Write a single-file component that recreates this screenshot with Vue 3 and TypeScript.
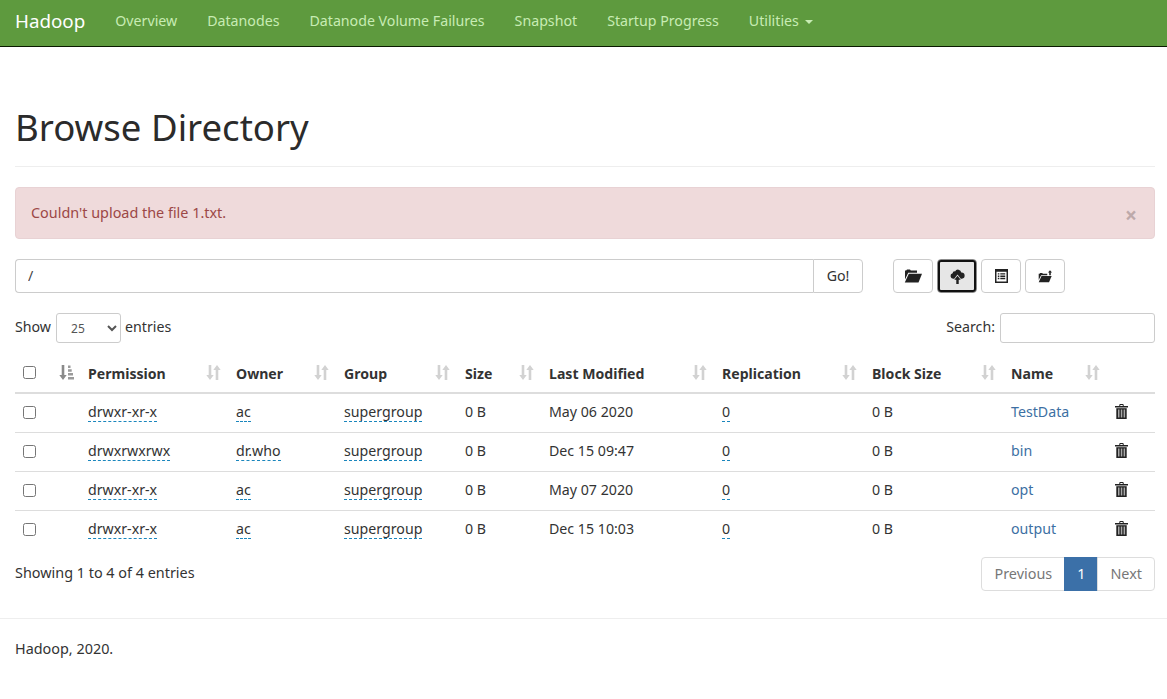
<script setup lang="ts">
interface Row {
  perm: string
  owner: string
  modified: string
  name: string
}

const navItems: string[] = ['Overview', 'Datanodes', 'Datanode Volume Failures', 'Snapshot', 'Startup Progress']
const headers: string[] = ['Permission', 'Owner', 'Group', 'Size', 'Last Modified', 'Replication', 'Block Size', 'Name']
const rows: Row[] = [
  { perm: 'drwxr-xr-x', owner: 'ac', modified: 'May 06 2020', name: 'TestData' },
  { perm: 'drwxrwxrwx', owner: 'dr.who', modified: 'Dec 15 09:47', name: 'bin' },
  { perm: 'drwxr-xr-x', owner: 'ac', modified: 'May 07 2020', name: 'opt' },
  { perm: 'drwxr-xr-x', owner: 'ac', modified: 'Dec 15 10:03', name: 'output' },
]
</script>

<template>
  <div class="page">
    <nav class="navbar">
      <a class="brand">Hadoop</a>
      <a v-for="item in navItems" :key="item" class="nav-link">{{ item }}</a>
      <a class="nav-link">Utilities <span class="caret"></span></a>
    </nav>

    <main class="container">
      <h1 class="page-title">Browse Directory</h1>

      <div class="alert">
        <span>Couldn't upload the file 1.txt.</span>
        <span class="close">×</span>
      </div>

      <div class="toolbar">
        <div class="path-group">
          <input class="path-input" value="/" />
          <button class="go">Go!</button>
        </div>
        <div class="tools">
          <button class="tool">
            <svg viewBox="0 0 18 14" width="18" height="14"><path d="M1 1.500h1.200L3 .5h3l.8 1H13v2.300H4.200L1 10.500z" fill="#222"/><path d="M4.800 4.800H18L14.500 13.500H.8z" fill="#222"/></svg>
          </button>
          <button class="tool active">
            <svg viewBox="0 0 16 17" width="15" height="16"><path d="M3.400 11.400A3 3 0 0 1 2.800 5.500a2.200 2.200 0 0 1 2.600-1.900A3.500 3.500 0 0 1 12 4.800a3.300 3.300 0 0 1 .6 6.600H11.500L8 6.800l-3.500 4.600z" fill="#222"/><path d="M8 8.300l3.400 4.200H9.300V17H6.700v-4.500H4.600z" fill="#222"/></svg>
          </button>
          <button class="tool">
            <svg viewBox="0 0 14 15" width="13" height="14"><path d="M.8.800h12.400v13.400H.8z" fill="none" stroke="#222" stroke-width="1.600"/><path d="M1 1h12v2H1zM3 4.500h1.700V6H3zM5.700 4.500H11V6H5.700zM3 7h1.700v1.500H3zM5.700 7H11v1.500H5.700zM3 9.500h1.700V11H3zM5.700 9.500H11V11H5.700z" fill="#222"/></svg>
          </button>
          <button class="tool">
            <svg viewBox="0 0 17 14" width="15" height="13"><path d="M.8 4h1l.7-.9h2.300l.7.900H10.500v1.500H3.500L.8 11z" fill="#222"/><path d="M4 6.300H15.500L12.500 13.500H.8z" fill="#222"/><path d="M13.600 0l2.300 2.600h-1.400V5.500h-1.800V2.600h-1.400z" fill="#222"/></svg>
          </button>
        </div>
      </div>

      <div class="table-controls">
        <label class="length">
          Show
          <select class="length-select"><option>25</option></select>
          entries
        </label>
        <label class="search">
          Search:
          <input class="search-input" />
        </label>
      </div>

      <table class="files">
        <colgroup>
          <col class="c-check" />
          <col class="c-sort" />
          <col class="c-perm" />
          <col class="c-owner" />
          <col class="c-group" />
          <col class="c-size" />
          <col class="c-mod" />
          <col class="c-rep" />
          <col class="c-block" />
          <col class="c-name" />
          <col />
        </colgroup>
        <thead>
          <tr>
            <th class="check-head"><input type="checkbox" class="check" /></th>
            <th class="sort-only">
              <svg class="sort-icon" viewBox="0 0 15 15" width="15" height="15"><path d="M2.700 0h2.600v10h2.400L4 15 .3 10h2.400z" fill="#8a8a8a"/><path d="M9 .5h2.500v2.400H9zM9 4.300h3.700v2.400H9zM9 8.100h5v2.400H9zM9 11.900h6v2.600H9z" fill="#9a9a9a"/></svg>
            </th>
            <th v-for="h in headers" :key="h" class="sortable">
              {{ h }}
              <svg class="sort-icon" viewBox="0 0 15 15" width="15" height="15"><path d="M2.700 0h2.600v10h2.400L4 15 .3 10h2.400z" fill="#d2d2d2"/><path d="M9.700 15h2.600V5h2.400L11 0 7.300 5h2.400z" fill="#d2d2d2"/></svg>
            </th>
            <th></th>
          </tr>
        </thead>
        <tbody>
          <tr v-for="r in rows" :key="r.name">
            <td class="check-cell"><input type="checkbox" class="check" /></td>
            <td></td>
            <td><span class="editable">{{ r.perm }}</span></td>
            <td><span class="editable">{{ r.owner }}</span></td>
            <td><span class="editable">supergroup</span></td>
            <td>0 B</td>
            <td>{{ r.modified }}</td>
            <td><span class="editable">0</span></td>
            <td>0 B</td>
            <td><a class="link">{{ r.name }}</a></td>
            <td>
              <svg class="trash" viewBox="0 0 13 15" width="13" height="15"><path d="M4.300 2V.9C4.300.4 4.700 0 5.200 0h2.600c.5 0 .9.400.9.900V2H13v1.500H0V2zM5.300 2h2.400V1H5.300z" fill="#222" fill-rule="evenodd"/><path d="M1.300 4.200h10.400V15H1.300z" fill="#222"/><path d="M3 5.500h1.500V13.500H3zM5.800 5.500h1.500V13.500H5.800zM8.600 5.500h1.500V13.500H8.600z" fill="#a8a8a8"/></svg>
            </td>
          </tr>
        </tbody>
      </table>

      <div class="table-footer">
        <div class="info">Showing 1 to 4 of 4 entries</div>
        <div class="pager">
          <a class="page-btn first">Previous</a>
          <a class="page-btn current">1</a>
          <a class="page-btn last">Next</a>
        </div>
      </div>
    </main>

    <footer class="footer">
      <p>Hadoop, 2020.</p>
    </footer>
  </div>
</template>

<style>
html, body {
  margin: 0;
  background: #fff;
}
</style>

<style scoped>
.page {
  font-family: "Noto Sans", "Open Sans", sans-serif;
  font-size: 14.2px;
  line-height: 20px;
  color: #333;
  width: 1167px;
  height: 699px;
  overflow: hidden;
}
.navbar {
  box-sizing: border-box;
  display: flex;
  align-items: center;
  height: 47px;
  background: #5e9a3e;
  border-bottom: 1px solid #0a1a00;
  padding: 0 0 5px 15px;
}
.brand {
  font-size: 18.8px;
  color: #fff;
  margin-right: 30px;
}
.nav-link {
  color: #c8ecb4;
  margin-right: 30px;
}
.caret {
  display: inline-block;
  width: 0;
  height: 0;
  margin-left: 2px;
  vertical-align: middle;
  border-top: 4px solid #c8ecb4;
  border-left: 4px solid transparent;
  border-right: 4px solid transparent;
}
.container {
  padding: 0 12px 0 15px;
}
.page-title {
  margin: 0;
  padding: 55px 0 13px;
  height: 51px;
  font-size: 36.6px;
  line-height: 51px;
  font-weight: 400;
  color: #2b2b2b;
  border-bottom: 1px solid #eee;
}
.alert {
  margin-top: 20px;
  height: 50px;
  display: flex;
  align-items: center;
  justify-content: space-between;
  padding: 0 15px;
  background: #efdadb;
  border: 1px solid #e8d2d4;
  border-radius: 4px;
  color: #9c4746;
  font-size: 14.4px;
}
.close {
  font-size: 21px;
  font-weight: 700;
  color: #bda9aa;
  padding-right: 2px;
  padding-top: 3px;
}
.toolbar {
  display: flex;
  margin-top: 20px;
}
.path-group {
  display: flex;
  width: 848px;
  height: 34px;
}
.path-input {
  flex: 1;
  min-width: 0;
  box-sizing: border-box;
  border: 1px solid #ccc;
  border-right: 0;
  border-radius: 4px 0 0 4px;
  padding: 0 0 0 12px;
  font: inherit;
  color: #444;
  outline: none;
}
.go {
  width: 50px;
  border: 1px solid #ccc;
  border-radius: 0 4px 4px 0;
  background: #fff;
  font: inherit;
  color: #333;
  padding: 0;
}
.tools {
  display: flex;
  gap: 4px;
  margin-left: 30px;
}
.tool {
  box-sizing: border-box;
  width: 40px;
  height: 34px;
  display: flex;
  align-items: center;
  justify-content: center;
  background: #fff;
  border: 1px solid #ccc;
  border-radius: 4px;
  padding: 0;
}
.tool.active {
  background: #e6e6e6;
  border-color: #8c8c8c;
  outline: 2px solid #111;
  outline-offset: -3px;
}
.table-controls {
  display: flex;
  justify-content: space-between;
  align-items: center;
  margin-top: 20px;
  height: 30px;
}
.length, .search {
  display: flex;
  align-items: center;
  padding-bottom: 2px;
}
.length-select {
  width: 65px;
  height: 30px;
  margin: 2px 4px 0 5px;
  border: 1px solid #ccc;
  border-radius: 3px;
  background: #fff;
  font: inherit;
  font-size: 12px;
  color: #555;
  padding: 0 10px;
}
.search-input {
  box-sizing: border-box;
  width: 155px;
  height: 30px;
  margin: 2px 0 0 5px;
  border: 1px solid #ccc;
  border-radius: 3px;
  outline: none;
}
.files {
  width: 1140px;
  table-layout: fixed;
  border-collapse: collapse;
  margin-top: 11px;
}
.c-check { width: 36px; }
.c-sort { width: 29px; }
.c-perm { width: 148px; }
.c-owner { width: 108px; }
.c-group { width: 121px; }
.c-size { width: 84px; }
.c-mod { width: 173px; }
.c-rep { width: 150px; }
.c-block { width: 139px; }
.c-name { width: 104px; }
.files th {
  height: 39px;
  box-sizing: border-box;
  padding: 1px 8px 0;
  text-align: left;
  font-weight: 700;
  font-size: 14.1px;
  color: #333;
  border-bottom: 2px solid #ddd;
  position: relative;
  white-space: nowrap;
}
.files th.check-head {
  padding: 0 8px 2px;
}
.files td {
  height: 39px;
  box-sizing: border-box;
  padding: 0 8px 2px;
  border-bottom: 1px solid #ddd;
  white-space: nowrap;
}
.files td.check-cell {
  padding: 0 8px;
}
.files tr:last-child td {
  border-bottom: 0;
}
.check {
  display: block;
  margin: 0;
  width: 13px;
  height: 13px;
}
.sort-icon {
  position: absolute;
  right: 7px;
  top: 11px;
}
.sort-only .sort-icon {
  right: 6px;
}
.editable {
  color: #333;
  border-bottom: 1px dashed #1a86bd;
}
.link {
  color: #3c6fa3;
}
.trash {
  display: block;
}
.table-footer {
  display: flex;
  justify-content: space-between;
  align-items: flex-start;
  margin-top: 8px;
  font-size: 14.4px;
}
.info {
  padding-top: 6px;
}
.pager {
  display: flex;
  height: 34px;
}
.page-btn {
  box-sizing: border-box;
  height: 34px;
  padding: 6px 12px;
  border: 1px solid #ddd;
  margin-left: -1px;
  color: #777;
  background: #fff;
}
.page-btn.first {
  border-radius: 4px 0 0 4px;
}
.page-btn.last {
  border-radius: 0 4px 4px 0;
}
.page-btn.current {
  background: #3b70a8;
  border-color: #3b70a8;
  color: #fff;
}
.footer {
  margin-top: 27px;
  border-top: 1px solid #eee;
  padding: 20px 15px 0;
  font-size: 14.4px;
}
.footer p {
  margin: 0;
}
</style>
